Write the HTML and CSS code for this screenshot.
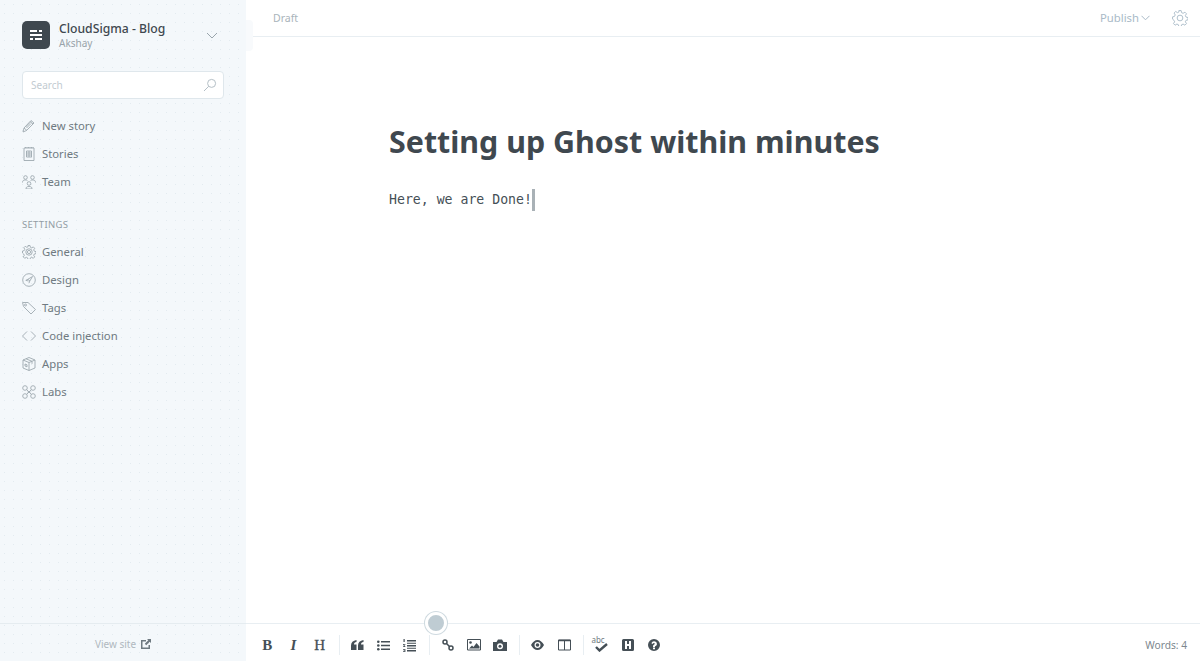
FILE: index.html
```html
<!DOCTYPE html>
<html lang="en">
<head>
    <meta charset="UTF-8">
    <meta name="viewport" content="width=device-width, initial-scale=1.0">
    <title>Setting up Ghost within minutes</title>
    <link rel="stylesheet" href="styles.css">
</head>
<body>
    <aside class="sidebar">
        <div class="blog-head">
            <div class="blog-logo">
                <svg width="28" height="28" viewBox="0 0 28 28"><path d="M8 9h7v2H8zM17 9h3v2h-3zM8 13h12v2H8zM8 17h3v2H8zM13 17h7v2h-7z" fill="#fff"/></svg>
            </div>
            <div class="blog-info">
                <div class="blog-name">CloudSigma - Blog</div>
                <div class="blog-user">Akshay</div>
            </div>
            <svg class="blog-caret" width="12" height="8" viewBox="0 0 12 8"><path d="M1 1l5 5 5-5" fill="none" stroke="#9aa5ac"/></svg>
        </div>

        <div class="search">
            <span class="search-text">Search</span>
            <svg width="14" height="14" viewBox="0 0 14 14" fill="none" stroke="#b4bfc6"><circle cx="8.6" cy="5.4" r="4"/><path d="M5.7 8.3L1 13"/></svg>
        </div>

        <nav class="nav">
            <a class="nav-item">
                <svg class="nav-icon" viewBox="0 0 14 14"><path d="M1 13l1-4 7-7.500 3 2.500-7.500 7.500zM2 9l3 2.500M8 2.500l3 2.500M3.500 8l4.500-4.500M4.500 9l4.500-4.500"/></svg>
                New story
            </a>
            <a class="nav-item">
                <svg class="nav-icon" viewBox="0 0 14 14"><path d="M2 1h10v12.500H2zM3.500 1V0M5 1V0M6.500 1V0M8 1V0M9.500 1V0M11 1V0M4.500 4h5v6h-5zM4.500 6h5M4.500 8h5M7 4v6"/></svg>
                Stories
            </a>
            <a class="nav-item">
                <svg class="nav-icon" viewBox="0 0 14 14"><circle cx="3.500" cy="2.500" r="1.800"/><circle cx="10.500" cy="2.500" r="1.800"/><circle cx="7" cy="8.500" r="1.800"/><path d="M.5 7.500c0-2 1-2.500 3-2.500 1 0 1.500.2 2 .7M13.500 7.500c0-2-1-2.500-3-2.500-1 0-1.500.2-2 .7M4 14c0-2 1-2.500 3-2.500s3 .5 3 2.500z"/></svg>
                Team
            </a>
        </nav>

        <div class="nav-label">SETTINGS</div>

        <nav class="nav">
            <a class="nav-item">
                <svg class="nav-icon" viewBox="0 0 14 14"><path d="M6 .5h2l.4 1.800 1.300.6 1.600-1 1.400 1.400-1 1.600.6 1.300 1.700.4v2l-1.700.4-.6 1.300 1 1.600-1.400 1.400-1.600-1-1.300.6-.4 1.700H6l-.4-1.700-1.300-.6-1.600 1-1.400-1.400 1-1.600-.6-1.300L.5 8V6l1.700-.4.6-1.300-1-1.600 1.400-1.400 1.600 1 1.300-.6z"/><circle cx="7" cy="7" r="3.200"/><circle cx="7" cy="7" r="1.600"/></svg>
                General
            </a>
            <a class="nav-item">
                <svg class="nav-icon" viewBox="0 0 14 14"><circle cx="7" cy="7" r="6.300"/><path d="M10.500 3.500L7.800 8 6 6.200zM6 6.200L3.800 7.400 6.600 8M7.800 8l-.9 2.200"/></svg>
                Design
            </a>
            <a class="nav-item">
                <svg class="nav-icon" viewBox="0 0 14 14"><path d="M.5 1.500h5.500l7.500 7-4.500 4.500-7.500-7.500z"/><circle cx="3.500" cy="4" r="1"/></svg>
                Tags
            </a>
            <a class="nav-item">
                <svg class="nav-icon" viewBox="0 0 14 14"><path d="M5 2.500L.5 7 5 11.500M9 2.500L13.500 7 9 11.500"/></svg>
                Code injection
            </a>
            <a class="nav-item">
                <svg class="nav-icon" viewBox="0 0 14 14"><path d="M7 .5l6 2.500v8l-6 2.500-6-2.500V3zM1 3l6 2.500L13 3M7 5.500v8M4 1.800l6 2.500v2.500M3 7l2 .8v2l-2-.8z"/></svg>
                Apps
            </a>
            <a class="nav-item">
                <svg class="nav-icon" viewBox="0 0 14 14"><circle cx="3" cy="3" r="2.300"/><circle cx="11" cy="3" r="2.300"/><circle cx="3" cy="11" r="2.300"/><circle cx="11" cy="11" r="2.300"/><path d="M4.500 4.500l5 5M9.500 4.500l-5 5M5.500 7h3"/></svg>
                Labs
            </a>
        </nav>

        <div class="view-site">
            View site
            <svg width="10" height="10" viewBox="0 0 10 10"><path d="M0 1h5v1.500H1.500v6h6V6H9v4H0zM6 0h4v4L8.700 2.700 5.200 6.200 3.800 4.800l3.500-3.500z" fill="#6f7a81"/></svg>
        </div>
    </aside>

    <main class="editor">
        <header class="topbar">
            <span class="status">Draft</span>
            <div class="actions">
                <span class="publish">Publish
                    <svg width="9" height="6" viewBox="0 0 9 6"><path d="M.5.8l4 4 4-4" fill="none" stroke="#a9bac7"/></svg>
                </span>
                <svg class="settings-icon" width="16" height="16" viewBox="0 0 14 14"><path d="M6 .5h2l.4 1.800 1.300.6 1.600-1 1.400 1.400-1 1.600.6 1.300 1.700.4v2l-1.700.4-.6 1.300 1 1.600-1.400 1.400-1.600-1-1.300.6-.4 1.700H6l-.4-1.700-1.300-.6-1.600 1-1.400-1.400 1-1.600-.6-1.300L.5 8V6l1.700-.4.6-1.300-1-1.600 1.400-1.400 1.600 1 1.300-.6z"/><circle cx="7" cy="7" r="2.500"/></svg>
            </div>
        </header>

        <div class="content">
            <h1 class="post-title">Setting up Ghost within minutes</h1>
            <p class="post-body">Here, we are Done!<span class="cursor"></span></p>
        </div>

        <footer class="toolbar">
            <div class="tool-group">
                <span class="tool tool-letter tool-bold">B</span>
                <span class="tool tool-letter tool-italic">I</span>
                <span class="tool tool-letter tool-plain">H</span>
            </div>
            <div class="tool-group">
                <span class="tool"><svg width="13" height="11" viewBox="0 0 13 11"><path d="M0 5.500C0 2.500 2 .5 5.500 0v2C3.800 2.300 3 3.200 3 4.500h2.500V10H0zM7 5.500C7 2.500 9 .5 12.500 0v2C10.800 2.300 10 3.200 10 4.500h2.500V10H7z" fill="#454f56"/></svg></span>
                <span class="tool"><svg width="13" height="11" viewBox="0 0 13 11" fill="#454f56"><circle cx="1.300" cy="1.800" r="1.300"/><circle cx="1.300" cy="5.500" r="1.300"/><circle cx="1.300" cy="9.200" r="1.300"/><path d="M4 1h9v1.600H4zM4 4.700h9v1.600H4zM4 8.400h9V10H4z"/></svg></span>
                <span class="tool"><svg width="13" height="13" viewBox="0 0 13 13" fill="#454f56"><path d="M.5 0h1.200v3H.5zM0 5h2.400v.8H1l1.400 1.700V8H0v-.8h1.300L0 5.600zM0 10h2.400v3H0v-.7h1.600v-.5H.6v-.6h1v-.5H0zM4 1h9v1.500H4zM4 3.700h9v1H4zM4 6h9v1.500H4zM4 8.700h9v1H4zM4 11h9v1.500H4z"/></svg></span>
            </div>
            <div class="tool-group">
                <span class="tool"><svg width="12" height="12" viewBox="0 0 12 12" fill="none" stroke="#454f56" stroke-width="1.500"><circle cx="3" cy="3" r="2"/><circle cx="9" cy="9" r="2"/><path d="M4.500 4.500l3 3"/></svg></span>
                <span class="tool"><svg width="14" height="12" viewBox="0 0 14 12"><path d="M.5.500h13v10.500H.5z" fill="none" stroke="#454f56"/><circle cx="3.500" cy="3.500" r="1.300" fill="#454f56"/><path d="M2 9.500l3-3 1.500 1.500 3-4 3 3.500v2z" fill="#454f56"/></svg></span>
                <span class="tool"><svg width="14" height="12" viewBox="0 0 14 12"><path fill-rule="evenodd" d="M0 3h3.500L5 .5h4L10.500 3H14v9H0zM7 4.200a3 3 0 100 6 3 3 0 000-6z" fill="#454f56"/><circle cx="7" cy="7.200" r="1.500" fill="#454f56"/></svg></span>
            </div>
            <div class="tool-group">
                <span class="tool"><svg width="13" height="10" viewBox="0 0 13 10"><path fill-rule="evenodd" d="M0 5c1.500-3 4-5 6.500-5S11.500 2 13 5c-1.500 3-4 5-6.500 5S1.500 8 0 5zm6.500-3a3 3 0 100 6 3 3 0 000-6z" fill="#454f56"/><circle cx="6.500" cy="5" r="1.800" fill="#454f56"/></svg></span>
                <span class="tool"><svg width="13" height="12" viewBox="0 0 13 12" fill="none" stroke="#454f56"><path d="M.5 1h12v10H.5zM6.500 1v10"/><path d="M.5 1.500h12" stroke-width="1.500"/></svg></span>
            </div>
            <div class="tool-group tool-group-last">
                <span class="tool tool-spell">
                    <span class="spell-text">abc</span>
                    <svg width="13" height="9" viewBox="0 0 13 9"><path d="M1 4l3.500 3.500L12 1" fill="none" stroke="#454f56" stroke-width="2.400"/></svg>
                </span>
                <span class="tool"><svg width="12" height="12" viewBox="0 0 12 12"><path fill-rule="evenodd" d="M1.500 0h9A1.500 1.500 0 0112 1.500v9a1.500 1.500 0 01-1.500 1.500h-9A1.500 1.500 0 010 10.500v-9A1.500 1.500 0 011.500 0zM3 2v8h2V7h2v3h2V2H7v3H5V2z" fill="#454f56"/></svg></span>
                <span class="tool"><svg width="12" height="12" viewBox="0 0 12 12"><path fill-rule="evenodd" d="M6 0a6 6 0 110 12A6 6 0 016 0zM5 8.500v1.700h2V8.500zM3.400 4.300l1.300.8c.2-.6.6-1 1.200-1 .5 0 .9.300.9.700 0 .5-.4.700-.9 1-.5.300-.9.800-.9 1.600V8h2v-.4c0-.3.200-.5.600-.7.700-.4 1.300-1 1.300-2C8.900 3.300 7.600 2.300 6 2.300c-1.200 0-2 .7-2.600 2z" fill="#454f56"/></svg></span>
            </div>
            <div class="word-count">Words: 4</div>
        </footer>
    </main>

    <span class="sidebar-handle"></span>
    <span class="focus-dot"></span>
</body>
</html>
```

FILE: styles.css
```css
html, body {
    height: 100%;
}
body {
    margin: 0;
    display: flex;
    height: 661px;
    overflow: hidden;
    background-color: #fff;
    color: #454f56;
    font-family: "Noto Sans", "Open Sans", sans-serif;
    position: relative;
}
.sidebar {
    width: 246px;
    flex-shrink: 0;
    display: flex;
    flex-direction: column;
    background-color: #f4f8fb;
    background-image: radial-gradient(#e3ebf0 0.6px, transparent 0.8px);
    background-size: 9px 9px;
}
.blog-head {
    display: flex;
    align-items: center;
    padding: 21px 28px 0 22px;
    height: 28px;
}
.blog-logo {
    width: 28px;
    height: 28px;
    border-radius: 5px;
    background-color: #3f484f;
    margin-right: 9px;
    display: flex;
}
.blog-info {
    flex: 1;
}
.blog-name {
    font-size: 12.2px;
    line-height: 16px;
    font-weight: 500;
    color: #3f484f;
}
.blog-user {
    font-size: 10px;
    line-height: 13px;
    color: #98a3aa;
}
.blog-caret {
    margin-top: 1px;
}
.search {
    display: flex;
    align-items: center;
    justify-content: space-between;
    box-sizing: border-box;
    width: 202px;
    height: 28px;
    margin: 22px 0 0 22px;
    padding: 0 6px 0 8px;
    background-color: #fff;
    border: 1px solid #dfe7ec;
    border-radius: 4px;
}
.search-text {
    font-size: 10px;
    color: #c2cbd1;
}
.nav {
    display: flex;
    flex-direction: column;
    padding-top: 13px;
}
.nav + .nav-label + .nav {
    padding-top: 5px;
}
.nav-item {
    display: flex;
    align-items: center;
    height: 28px;
    padding-left: 22px;
    font-size: 11.3px;
    line-height: 24px;
    color: #6f7a81;
}
.nav-icon {
    width: 14px;
    height: 14px;
    margin-right: 6px;
    fill: none;
    stroke: #9ea9b0;
    stroke-width: 0.9;
}
.nav-label {
    margin: 21px 0 0 22px;
    height: 16px;
    line-height: 16px;
    font-size: 9.5px;
    letter-spacing: 0.3px;
    color: #929da4;
}
.view-site {
    margin-top: auto;
    height: 38px;
    padding-top: 3px;
    box-sizing: border-box;
    display: flex;
    align-items: center;
    justify-content: center;
    gap: 5px;
    border-top: 1px solid #e5ecf0;
    font-size: 10px;
    color: #b0b9bf;
}
.editor {
    flex: 1;
    display: flex;
    flex-direction: column;
    min-width: 0;
}
.topbar {
    height: 36px;
    display: flex;
    align-items: center;
    justify-content: space-between;
    padding: 0 12px 0 27px;
    border-bottom: 1px solid #e8eef2;
}
.status {
    font-size: 10.5px;
    color: #a9b4bb;
}
.actions {
    display: flex;
    align-items: center;
    gap: 22px;
}
.publish {
    display: flex;
    align-items: center;
    gap: 2px;
    font-size: 11.3px;
    line-height: 14px;
    color: #a9bac7;
}
.settings-icon {
    fill: none;
    stroke: #a9bac7;
    stroke-width: 0.8;
}
.content {
    flex: 1;
    padding: 85px 0 0 143px;
}
.post-title {
    margin: 0;
    font-size: 30.4px;
    line-height: 40px;
    font-weight: 700;
    color: #3f484f;
}
.post-body {
    margin: 27px 0 0;
    font-family: "DejaVu Sans Mono", monospace;
    font-size: 13.2px;
    line-height: 22px;
    color: #454f56;
    display: flex;
    align-items: center;
}
.cursor {
    width: 3px;
    height: 22px;
    background-color: #a9b1b6;
}
.toolbar {
    height: 38px;
    box-sizing: border-box;
    display: flex;
    align-items: center;
    padding: 5px 13px 0 8px;
    border-top: 1px solid #e8eef2;
}
.tool-group {
    display: flex;
    align-items: center;
    padding-right: 6px;
    margin-right: 4.3px;
    border-right: 1px solid #e8eef2;
    height: 20px;
}
.tool-group-last {
    border-right: none;
}
.tool {
    width: 26.3px;
    display: flex;
    justify-content: center;
    align-items: center;
    position: relative;
}
.tool-letter {
    font-family: "Liberation Serif", serif;
    font-size: 15px;
    font-weight: 700;
    color: #454f56;
}
.tool-italic {
    font-style: italic;
}
.tool-plain {
    font-weight: 400;
    -webkit-text-stroke: 0.3px #454f56;
}
.tool-spell svg {
    margin-top: 4px;
}
.spell-text {
    position: absolute;
    left: 3px;
    top: -5px;
    font-size: 8px;
    color: #6f7a81;
}
.word-count {
    margin-left: auto;
    font-size: 10.2px;
    color: #7d878e;
}
.sidebar-handle {
    position: absolute;
    left: 246px;
    top: 20px;
    width: 7px;
    height: 31px;
    background-color: #f8fafc;
    border-radius: 0 4px 4px 0;
}
.focus-dot {
    position: absolute;
    left: 425px;
    top: 612px;
    width: 16px;
    height: 16px;
    background-color: #bfccd3;
    border-radius: 50%;
    border: 3px solid #fff;
    box-shadow: 0 0 0 1px #cfdae0;
}
```
